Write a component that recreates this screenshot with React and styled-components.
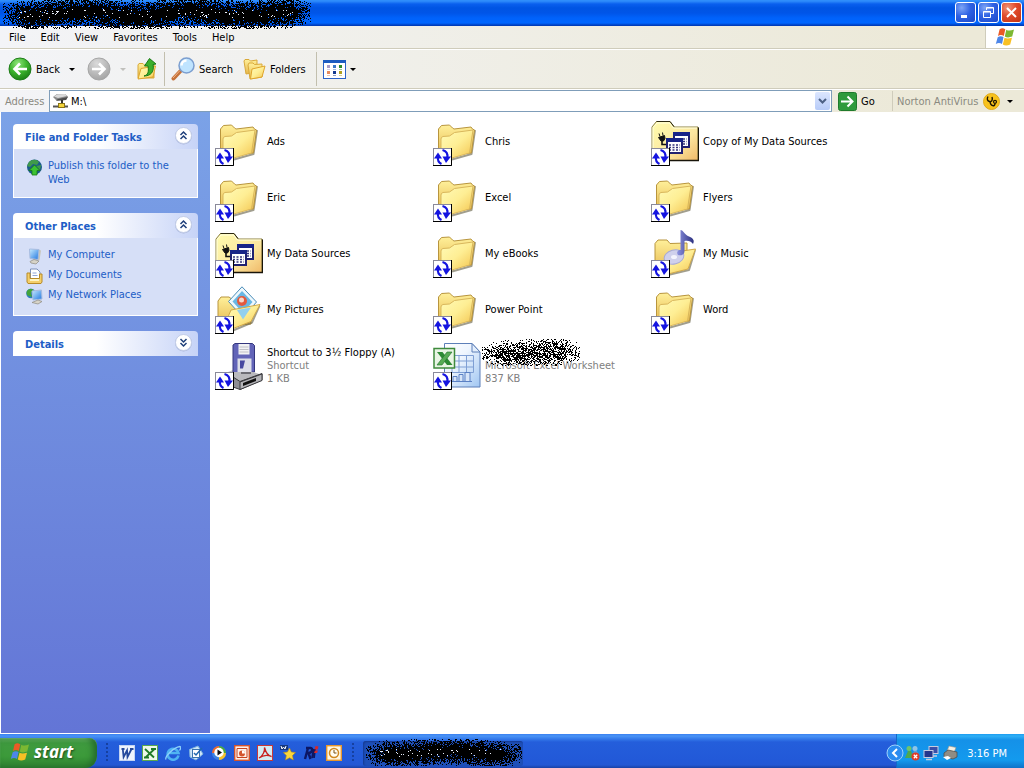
import { useState } from 'react';
import styled, { createGlobalStyle, css } from 'styled-components';

const GlobalStyle = createGlobalStyle`
  *, *::before, *::after {
    box-sizing: border-box;
  }

  body {
    margin: 0;
    font-family: Tahoma, 'DejaVu Sans Condensed', 'Noto Sans', sans-serif;
    font-size: 11px;
    line-height: 13px;
    color: #000;
    overflow: hidden;
  }

  button, input {
    font: inherit;
    color: inherit;
  }

  ul {
    list-style: none;
    margin: 0;
    padding: 0;
  }

  svg {
    display: block;
    flex: none;
  }
`;

const Desktop = styled.div`
  display: flex;
  flex-direction: column;
  height: 100vh;
  min-height: 480px;
`;

const PlainButton = styled.button`
  display: flex;
  align-items: center;
  border: none;
  background: none;
  padding: 0;
  cursor: default;
`;

/* ---------- title bar ---------- */

const TitleBar = styled.header`
  position: relative;
  display: flex;
  justify-content: flex-end;
  align-items: center;
  gap: 2px;
  flex: none;
  height: 26px;
  padding: 0 2px 1px 0;
  background: linear-gradient(
    #2f8dfb 0,
    #2f8dfb 1px,
    #0a5fee 4px,
    #0054e3 8px,
    #0055e8 13px,
    #0062fb 18px,
    #0066ff 23px,
    #0041c4 25px,
    #0038b0 26px
  );
`;

const WindowButton = styled(PlainButton)`
  justify-content: center;
  width: 21px;
  height: 21px;
  border: 1px solid #fff;
  border-radius: 3px;
  background: ${props =>
    props.$close
      ? 'radial-gradient(circle at 30% 25%, #f0947a, #e0492a 45%, #c03415)'
      : 'radial-gradient(circle at 30% 25%, #7fa6f6, #2f62e4 45%, #1c48c8)'};
`;

const ScribbleSvg = styled.svg`
  position: absolute;
  left: ${props => props.$left}px;
  top: ${props => props.$top}px;
  pointer-events: none;
  z-index: 1;
`;

/* ---------- menu, toolbar, address ---------- */

const MenuBar = styled.nav`
  display: flex;
  justify-content: space-between;
  flex: none;
  height: 23px;
  border-bottom: 1px solid #cfccbb;
  background: linear-gradient(90deg, #f3f4f7, #ece9d8 90%);
`;

const MenuList = styled.ul`
  display: flex;
  align-items: center;
  gap: 15px;
  && {
    padding-left: 9px;
  }
`;

const Throbber = styled.div`
  display: flex;
  align-items: center;
  justify-content: center;
  width: 39px;
  border-left: 1px solid #cfccbb;
  background: #fff;
`;

const Toolbar = styled.div`
  display: flex;
  align-items: center;
  flex: none;
  height: 40px;
  padding-left: 8px;
  border-top: 1px solid #fff;
  border-bottom: 1px solid #cfccbb;
  background: linear-gradient(90deg, #f3f4f7, #ece9d8 90%);
`;

const ToolButton = styled(PlainButton)`
  gap: 4px;
  height: 34px;
  margin-right: ${props => props.$after || 0}px;
`;

const ToolDivider = styled.div`
  width: 1px;
  height: 34px;
  margin: 0 6px;
  background: #c2bfae;
`;

const Caret = styled.span`
  border: 3px solid transparent;
  border-top-color: ${props => (props.$faded ? '#c0c0bc' : '#000')};
  border-bottom: none;
  margin-left: ${props => props.$before || 0}px;
`;

const AddressBar = styled.div`
  display: flex;
  align-items: center;
  flex: none;
  height: 23px;
  border-top: 1px solid #fff;
  background: linear-gradient(90deg, #f3f4f7, #ece9d8 90%);
`;

const AddressLabel = styled.label`
  width: 49px;
  padding-left: 5px;
  color: #8a8980;
`;

const AddressField = styled.div`
  display: flex;
  align-items: center;
  flex: 1;
  height: 22px;
  padding: 0 1px 0 2px;
  border: 1px solid #7f9db9;
  background: #fff;
`;

const AddressInput = styled.input`
  flex: 1;
  min-width: 0;
  height: 18px;
  padding: 0 2px;
  border: none;
  outline: none;
  background: none;
`;

const DropButton = styled(PlainButton)`
  justify-content: center;
  width: 15px;
  height: 18px;
  border-radius: 2px;
  background: linear-gradient(#dce6fe, #b7cbf8);
`;

const GoButton = styled(PlainButton)`
  gap: 4px;
  width: 60px;
  padding-left: 6px;
`;

const Norton = styled.div`
  display: flex;
  align-items: center;
  width: 132px;
  height: 20px;
  padding-left: 4px;
  border-left: 1px solid #cfccbb;
  color: #8a8980;
`;

const NortonName = styled.span`
  width: 86px;
  white-space: nowrap;
`;

/* ---------- body ---------- */

const Body = styled.div`
  display: flex;
  flex: 1;
  min-height: 0;
  padding: 0 0 1px 1px;
  background: #fff;
`;

const Sidebar = styled.aside`
  display: flex;
  flex-direction: column;
  gap: 15px;
  flex: none;
  width: 209px;
  padding: 12px;
  background: linear-gradient(#7ba2e7, #6375d6);
`;

const Panel = styled.section`
  border-radius: 4px 4px 0 0;
  overflow: hidden;
`;

const PanelHeader = styled.h2`
  display: flex;
  justify-content: space-between;
  height: 25px;
  margin: 0;
  padding: 2px 5px 0 12px;
  font-size: 11px;
  font-weight: bold;
  line-height: 24px;
  color: #215dc6;
  background: linear-gradient(90deg, #fff 45%, #c6d3f7);
`;

const PanelToggle = styled(PlainButton)`
  align-self: flex-start;
`;

const PanelBody = styled.ul`
  display: flex;
  flex-direction: column;
  gap: 3px;
  border: 1px solid #fff;
  border-top: none;
  background: #d6dff7;
  && {
    padding: 10px 12px;
  }
`;

const TaskLink = styled.a`
  display: flex;
  gap: 5px;
  line-height: 14px;
  color: #215dc6;
  text-decoration: none;

  &:hover {
    text-decoration: underline;
  }
`;

const FileGrid = styled.ul`
  display: grid;
  grid-template-columns: repeat(auto-fill, 210px);
  grid-auto-rows: 48px;
  gap: 8px;
  align-content: start;
  flex: 1;
  && {
    padding: 6px 0 0 5px;
  }
`;

const FileItem = styled.li`
  display: flex;
  align-items: center;
  gap: 4px;
`;

const FileText = styled.div`
  position: relative;
  padding-bottom: 2px;
  white-space: nowrap;
`;

const FileLine = styled.div`
  min-height: 13px;
  ${props =>
    props.$muted &&
    css`
      color: #808080;
    `}
`;

/* ---------- taskbar ---------- */

const Taskbar = styled.footer`
  display: flex;
  align-items: stretch;
  flex: none;
  height: 34px;
  background: linear-gradient(
    #3a80f0 0,
    #4a94f6 2px,
    #3479ea 5px,
    #245edb 8px,
    #2259d8 26px,
    #2458d4 31px,
    #1941a5 34px
  );
`;

const StartButton = styled(PlainButton)`
  gap: 4px;
  width: 97px;
  margin-top: 4px;
  padding: 0 0 2px 10px;
  border-radius: 0 8px 12px 0;
  font-family: 'Open Sans', 'Noto Sans', sans-serif;
  font-size: 17px;
  font-weight: bold;
  font-style: italic;
  line-height: 20px;
  color: #fff;
  text-shadow: 1px 1px 2px #1d4d1d;
  background: linear-gradient(#6cb96a, #3f9a3f 5px, #3c9a3a 18px, #2d8030);
  box-shadow: inset -4px 0 6px #246b2a, inset 0 1px 1px #8fd08d;
`;

const QuickLaunch = styled.div`
  display: flex;
  align-items: center;
  gap: 7px;
  padding: 4px 8px 0 9px;
`;

const Grip = styled.div`
  align-self: center;
  width: 4px;
  height: 20px;
  margin: 4px 0 0 ${props => props.$before || 0}px;
  background: radial-gradient(circle at 1px 1px, #1640a0 1px, transparent 1px) 0 0 / 4px 4px;
`;

const TaskButton = styled(PlainButton)`
  position: relative;
  width: 160px;
  height: 25px;
  margin: 7px 0 0 7px;
  border-radius: 3px;
  background: #1e4fb8;
  box-shadow: inset 1px 1px 2px #153a90;
`;

const Tray = styled.div`
  display: flex;
  align-items: center;
  gap: 3px;
  margin-left: auto;
  padding: 4px 17px 0 0;
  color: #fff;
`;

const TrayArea = styled.div`
  display: flex;
  align-items: center;
  align-self: stretch;
  margin-left: auto;
  width: 128px;
  background: linear-gradient(#1c9bf0 0, #2fb0f6 2px, #1591e8 6px, #139aee 26px, #0f72c8 34px);
  box-shadow: inset 1px 0 0 #1468c8;
`;

const Expander = styled(PlainButton)`
  margin: 4px 0 0 -10px;
`;

const Clock = styled.time`
  margin-left: 6px;
  white-space: nowrap;
`;

/* ---------- icons ---------- */

const HiddenSvg = styled.svg`
  position: absolute;
`;

const Gradients = () => (
  <HiddenSvg width="0" height="0" aria-hidden="true">
    <defs>
      <linearGradient id="folderFront" x1="0" y1="0" x2="1" y2="1">
        <stop offset="0" stopColor="#fffbb8" />
        <stop offset="0.5" stopColor="#feee94" />
        <stop offset="1" stopColor="#f3c44e" />
      </linearGradient>
      <linearGradient id="folderBack" x1="0" y1="0" x2="0" y2="1">
        <stop offset="0" stopColor="#fff09a" />
        <stop offset="1" stopColor="#e5b64c" />
      </linearGradient>
      <linearGradient id="folderFlat" x1="0" y1="0" x2="1" y2="1">
        <stop offset="0" stopColor="#fffcae" />
        <stop offset="0.6" stopColor="#fce7a0" />
        <stop offset="1" stopColor="#efb968" />
      </linearGradient>
      <radialGradient id="green" cx="0.4" cy="0.25" r="0.8">
        <stop offset="0" stopColor="#8fe57a" />
        <stop offset="0.5" stopColor="#3eb52e" />
        <stop offset="1" stopColor="#1a7d14" />
      </radialGradient>
      <radialGradient id="grey" cx="0.4" cy="0.25" r="0.8">
        <stop offset="0" stopColor="#dadada" />
        <stop offset="1" stopColor="#a2a2a2" />
      </radialGradient>
      <linearGradient id="screen" x1="0" y1="0" x2="1" y2="1">
        <stop offset="0" stopColor="#c8ecff" />
        <stop offset="1" stopColor="#1f76e0" />
      </linearGradient>
      <linearGradient id="page" x1="0" y1="0" x2="1" y2="1">
        <stop offset="0" stopColor="#fff" />
        <stop offset="0.4" stopColor="#eef5fe" />
        <stop offset="1" stopColor="#a0c6f2" />
      </linearGradient>
      <linearGradient id="note" x1="0" y1="0" x2="1" y2="0">
        <stop offset="0" stopColor="#8c92e0" />
        <stop offset="1" stopColor="#2c3080" />
      </linearGradient>
    </defs>
  </HiddenSvg>
);

function makeRandom(seed) {
  let s = seed;
  return () => {
    s = (s * 1664525 + 1013904223) % 4294967296;
    return s / 4294967296;
  };
}

// spray-can dots: dense along the middle, thinner towards the edges
function sprayPath(width, height, seed, density) {
  const random = makeRandom(seed);
  let d = '';
  for (let x = 0; x < width; x++) {
    const end = Math.min(1, x / 20, (width - x) / 20);
    const middle = height / 2 + Math.sin(x / 17) * height * 0.07;
    const half = (height / 2) * (0.65 + 0.35 * end);
    for (let y = 0; y < height; y++) {
      const off = Math.abs(y - middle) / half;
      const chance = density * (1.15 - off * off * 0.95) * (0.35 + 0.65 * end);
      if (random() < chance) d += `M${x} ${y}h1v1h-1z`;
    }
  }
  return d;
}

const Scribble = ({ width, height, left, top, seed, density = 0.88, specks = 0 }) => {
  const random = makeRandom(seed + 7);
  let white = '';
  for (let i = 0; i < specks; i++) {
    const x = Math.floor(14 + random() * (width - 28));
    const y = Math.floor(height * 0.38 + random() * height * 0.26);
    white += `M${x} ${y}h1v1h-1z`;
  }
  return (
    <ScribbleSvg
      $left={left}
      $top={top}
      width={width}
      height={height}
      shapeRendering="crispEdges"
      aria-hidden="true"
    >
      <path d={sprayPath(width, height, seed, density)} fill="#000" />
      <path d={white} fill="#e8ecf8" />
    </ScribbleSvg>
  );
};

const Flag = ({ size }) => (
  <svg width={size} height={size} viewBox="0 0 20 20">
    <path d="M4.6 2.2C6.6.8 8.4 1 10.3 2.2L8.8 9C7 7.9 5.1 7.7 3 9z" fill="#ea5a26" />
    <path d="M11.3 2.7C13.3 3.9 15.5 3.8 19 2.6L17.2 9.6C14 10.7 11.8 10.7 9.8 9.5z" fill="#7cb832" />
    <path d="M2.7 10.2C4.7 8.9 6.7 9 8.5 10.1L7 17C5.2 15.9 3.1 15.7.8 17z" fill="#4d86e8" />
    <path d="M9.5 10.7C11.5 11.8 13.6 11.8 17 10.7L15.2 17.6C12 18.8 9.9 18.7 7.8 17.5z" fill="#f8c024" />
  </svg>
);

const RoundArrow = ({ back }) => (
  <svg width="24" height="24" viewBox="0 0 24 24">
    <circle
      cx="12"
      cy="12"
      r="11"
      fill={back ? 'url(#green)' : 'url(#grey)'}
      stroke={back ? '#1f7d1a' : '#a6a6a6'}
    />
    <path
      d={back ? 'M19 12H7M12 6.500L6.500 12L12 17.500' : 'M5 12h12M12 6.500L17.500 12L12 17.500'}
      fill="none"
      stroke="#fff"
      strokeWidth="2.6"
    />
  </svg>
);

const UpFolder = () => (
  <svg width="22" height="24" viewBox="0 0 22 24">
    <path d="M2 8l1-1.500h4L8.500 8H18v13H2z" fill="url(#folderBack)" stroke="#d9a93a" />
    <path d="M2 22L5 11.500L19.500 9L17 20z" fill="url(#folderFront)" stroke="#dfa52c" />
    <path d="M8 19c4-1 5-4 4-10H8.500L13.500 1.500L20 7l-3 .5c1.500 7-2 11.500-9 11.500z" fill="#3bb02c" stroke="#1b7a16" />
  </svg>
);

const SearchIcon = () => (
  <svg width="24" height="24" viewBox="0 0 24 24">
    <path d="M2.500 21.500l7-7.500" stroke="#c5723a" strokeWidth="4" strokeLinecap="round" />
    <path d="M2 21l7-7.500" stroke="#f3b487" strokeWidth="1" />
    <circle cx="15.500" cy="8.500" r="7.500" fill="#bfe4ff" stroke="#7c9fd0" strokeWidth="1.500" />
    <path d="M10.500 8.500a5 5 0 0 1 5-5" fill="none" stroke="#fff" strokeWidth="2.500" />
  </svg>
);

const FoldersIcon = () => (
  <svg width="23" height="22" viewBox="0 0 23 22">
    <path d="M1 3l1-1.500h4L7.500 3 14 2v12L3 16z" fill="url(#folderBack)" stroke="#d9a93a" />
    <path d="M5 7l1-2h4l1.500 1.500L19 6v13L7 21z" fill="url(#folderBack)" stroke="#d9a93a" />
    <path d="M7.500 21L9 11l13-3-3 11z" fill="url(#folderFront)" stroke="#dfa52c" />
  </svg>
);

const ViewsIcon = () => (
  <svg width="23" height="19" viewBox="0 0 23 19" shapeRendering="crispEdges">
    <rect x="0.500" y="0.500" width="22" height="18" fill="#fff" stroke="#2a62c8" />
    <rect width="23" height="3" fill="#1c5bc0" />
    {['#a99bc8', '#3a78c8', '#2c8a28', '#e58a5c', '#153a90', '#b0a020'].map((fill, i) => (
      <g key={fill} fill={fill}>
        <rect x={4 + (i % 3) * 6} y={i < 3 ? 5 : 11} width="3" height="3" />
        <rect x={4 + (i % 3) * 6} y={i < 3 ? 9 : 15} width="3" height="1" opacity="0.5" />
      </g>
    ))}
  </svg>
);

const NetDriveIcon = () => (
  <svg width="17" height="16" viewBox="0 0 17 16">
    <path d="M1 4l4-3h8l3 2.500-2 3.500-9 1z" fill="#8a8a8a" />
    <path d="M2 3.500L5.500 1.200 13 1l2 2-9 2z" fill="#dadada" />
    <path d="M4 7.500l10-.5 2-3-10 2z" fill="#4c4c4c" />
    <path d="M10 7v5" stroke="#333" strokeWidth="2" />
    <path d="M1 13.500h15" stroke="#555" strokeWidth="2" />
    <rect x="6.500" y="10.500" width="6" height="4" fill="#f3d43c" stroke="#8a7418" />
  </svg>
);

const NortonIcon = () => (
  <svg width="17" height="17" viewBox="0 0 17 17">
    <circle cx="8.500" cy="8.500" r="8" fill="#f8c21c" stroke="#e0aa18" />
    <path d="M5 3.500c-1.500 2.500-.5 4.500 1.500 5s3.500-1.500 2.500-4.500M7 8.500c.5 5 5 5.500 5 2" fill="none" stroke="#1c1400" strokeWidth="1.4" />
    <circle cx="12" cy="8.800" r="1.500" fill="none" stroke="#1c1400" strokeWidth="1.2" />
  </svg>
);

const Chevrons = ({ down }) => (
  <svg width="19" height="19" viewBox="0 0 19 19">
    <circle cx="9.500" cy="10" r="8.500" fill="#a9b6d8" />
    <circle cx="9.500" cy="9.500" r="8" fill="#fff" stroke="#c3cde8" />
    <path
      d={down ? 'M6.500 6l3 3 3-3M6.500 10l3 3 3-3' : 'M6.500 9l3-3 3 3M6.500 13l3-3 3 3'}
      fill="none"
      stroke="#1f3f7a"
      strokeWidth="1.500"
    />
  </svg>
);

const GlobeIcon = () => (
  <svg width="17" height="17" viewBox="0 0 17 17">
    <circle cx="8.500" cy="8" r="7.500" fill="#1b5a8c" />
    <path d="M3 3c3-3 8-3 10 0l-2 3-4-1-3 3-3-1zM10 7l5-1-1 5z" fill="#3f9a4a" />
    <path d="M3 11.500l5.500-5.500 5.500 5.500h-3V16H6v-4.500z" fill="#3cc232" stroke="#167a14" strokeWidth="0.8" />
  </svg>
);

const ComputerIcon = () => (
  <svg width="17" height="17" viewBox="0 0 17 17">
    <path d="M12.500 1.500l2.500 1-1.500 10-2-1z" fill="#c9c6b8" />
    <path d="M3.500 1l9.500.5-1 10-8-1z" fill="url(#screen)" stroke="#a8bce0" />
    <path d="M4 13.500l4-2 5 1.500-3 3-5-1z" fill="#d8d4c8" stroke="#8d8a80" strokeWidth="0.7" />
  </svg>
);

const DocumentsIcon = () => (
  <svg width="17" height="17" viewBox="0 0 17 17">
    <path d="M4.500 1h6.500l3 3v9H4.500z" fill="#fff" stroke="#7d8fb8" />
    <path d="M6.500 5h4M6.500 7.500h5" stroke="#8fa5d8" />
    <path d="M1 5h3v5.500h9.500V6H16v8l-1 1.500H2L1 14z" fill="#f4cf6a" stroke="#b78a28" />
    <path d="M4 12h9" stroke="#fff4c0" strokeWidth="2" />
  </svg>
);

const NetworkIcon = () => (
  <svg width="17" height="17" viewBox="0 0 17 17">
    <circle cx="5" cy="5.500" r="4.800" fill="#2e7cc0" />
    <path d="M.5 4c2-4 5-4 7-2L5 5l1 4-3-1-2-1z" fill="#43a43c" />
    <path d="M6 3l9.500-1 .5 9-9 1z" fill="url(#screen)" stroke="#a8bce0" />
    <path d="M6 14.500l6-2.500 4 1.500-4 2.500z" fill="#d8d4c8" stroke="#8d8a80" strokeWidth="0.7" />
  </svg>
);

const SyncBadge = () => (
  <g>
    <rect x="0.500" y="30.500" width="18" height="17" fill="#fff" stroke="#8a8a9a" />
    <path d="M18.500 30v17.500H0" fill="none" stroke="#000" />
    <path d="M8.500 46C5.500 44.500 4.500 42 5 39" fill="none" stroke="#1414e0" strokeWidth="2.2" />
    <path d="M1 40.500L5 34.500L9 40.500z" fill="#1414e0" />
    <path d="M9.500 32c4 1 5.500 4 4.800 8" fill="none" stroke="#1414e0" strokeWidth="2.2" />
    <path d="M9.500 38.500h8.500L13 45z" fill="#1414e0" />
  </g>
);

const FolderArt = () => (
  <g strokeLinejoin="round">
    <path d="M19 41.500l19.500-5.500L42 12" fill="none" stroke="#6e6a52" strokeWidth="2" opacity="0.65" />
    <path d="M5.500 38V11l3-3.500 8-.5 3 3 1.500 1L38 9l1.500 2 2 1-3 23z" fill="url(#folderBack)" stroke="#b8953e" />
    <path d="M8 39.500V21q0-2 2-2.500l6.500-.5 5-3.500L40 12l-3.500 23L17 40.500z" fill="url(#folderFront)" stroke="#d9b75c" />
  </g>
);

const DataTable = ({ x, y }) => (
  <g>
    <rect x={x + 1} y={y + 1} width="15" height="14" fill="#fff" stroke="#202070" strokeWidth="2" />
    <rect x={x} y={y} width="17" height="4" fill="#182488" />
    <path
      d={`M${x + 3} ${y + 7}h11M${x + 3} ${y + 9.5}h11M${x + 3} ${y + 12}h11`}
      stroke="#34347c"
      strokeWidth="1.3"
      strokeDasharray="2 1.5"
    />
  </g>
);

const DataSourceArt = () => (
  <g>
    <path d="M1 42.500V9l4.500-5.500h13.500L23 9h24v33.500z" fill="url(#folderFlat)" stroke="#8c8040" />
    <path d="M5.500 3.500H19L23 8.500" fill="none" stroke="#2c2810" />
    <path d="M47.500 9.500v33H18" fill="none" stroke="#18140a" strokeWidth="1.3" />
    <path d="M2 30V9.500L6 5h12.500l4 5H46" fill="none" stroke="#ffffe0" />
    <path d="M7.500 19.500l6-2 .5 3-1.500 2.500H10zM9 18.500L8 15.500M12 17.500l-.5-3" fill="#111" stroke="#111" />
    <path d="M11 22v4.500h5" fill="none" stroke="#111" strokeWidth="1.6" />
    <DataTable x={22} y={14} />
    <DataTable x={15} y={20} />
  </g>
);

const MusicArt = () => (
  <g strokeLinejoin="round">
    <path d="M4 41V13.500L7 10h9l3 3.500L36 13v25L10 43z" fill="url(#folderBack)" stroke="#b8953e" />
    <path d="M17 45l21-5 6-20" fill="none" stroke="#6e6a52" strokeWidth="2" opacity="0.65" />
    <path d="M9 43.500L18 23l26.500-4-7.500 20-20 5z" fill="url(#folderFront)" stroke="#d0a848" />
    <ellipse cx="23" cy="27" rx="10" ry="7" transform="rotate(-15 23 27)" fill="#cfd0ec" stroke="#a7a9d6" />
    <ellipse cx="23" cy="27" rx="3" ry="2" fill="#f4f4fd" />
    <path d="M29.500 0c3 0 4 5 8.500 6.500 5 2 5.500 4.500 4 7.500-2-3-5-3.500-8.500-3v10c0 4-3.500 5-6.500 4-2-3 0-5 2.500-5z" fill="url(#note)" />
  </g>
);

const PicturesArt = () => (
  <g strokeLinejoin="round">
    <path d="M3 41V15l3-4h8l4 3 18 2v22z" fill="url(#folderBack)" stroke="#b8953e" />
    <path d="M27 .8L41.500 16 28 31.500 13.500 15.500z" fill="#eef8fd" stroke="#4a8cb8" />
    <path d="M27 5L37.500 16 28 27 17.500 15.500z" fill="#69b7e4" />
    <circle cx="27" cy="15" r="5" fill="#e4593c" />
    <circle cx="26.500" cy="14" r="2.500" fill="#f6d8cc" />
    <path d="M18 44.500l19-8 7.500-17" fill="none" stroke="#6e6a52" strokeWidth="2" opacity="0.65" />
    <path d="M8 42.500L16 24l29-5.500-9 17L17 43z" fill="url(#folderFront)" stroke="#d0a848" />
    <path d="M22 24l14-2.500-8 12z" fill="#93d0ee" />
  </g>
);

const FloppyArt = () => (
  <g>
    <path d="M3 34l15-6v8z" fill="#c8c8ca" />
    <path d="M18 3l2-1.500h17.500l2 2V30l-21.500 1z" fill="#6264b8" stroke="#34367e" />
    <path d="M23.500 2h11v10.500h-11z" fill="#f2f2f4" />
    <path d="M24.500 5h9M24.500 7.500h9M24.500 10h9" stroke="#b4b4bc" strokeWidth="0.8" />
    <path d="M22.500 16.500h14V30h-14z" fill="#dcdee8" />
    <path d="M25 18.500h5l-2 8h-3z" fill="#4648a0" />
    <path d="M4 36l14-6 20 0 9 3-22 8z" fill="#b9b9bd" />
    <path d="M18 35l7 4.500L47 31.500V38L25 47.500 18 45z" fill="#8e8e94" stroke="#3a3a3e" />
    <path d="M25 40l22-8v6.500L25 47.500z" fill="#b4b4b8" stroke="#3a3a3e" />
    <path d="M28 41l13-5v3L28 44z" fill="#111" />
    <path d="M26 31h10" stroke="#55555c" strokeWidth="1.5" />
  </g>
);

const ExcelArt = () => (
  <g>
    <path d="M11.500 1.500H39l8 8.500v35H11.500z" fill="url(#page)" stroke="#5c7fb8" />
    <path d="M39 1.500V10h8z" fill="#e4effc" stroke="#5c7fb8" />
    <path d="M19 13.500h21.500v17H19zM19 19h21.500M19 25h21.500M26 13.500v17M33.500 13.500v17" fill="none" stroke="#7f9fd4" />
    <path d="M20 39.500v-5h4v5M26 39.500v-7h4v7M32 39.500v-9h5v9M18 39.500h21" fill="#d7e5f8" stroke="#5a80c4" />
    <rect x="1" y="6.500" width="20.500" height="19.500" fill="#e9f5e4" stroke="#3f8a3c" strokeWidth="1.5" />
    <path d="M4 10h5.500l10 13H14z" fill="#2d8a34" />
    <path d="M14 10h5L9 23H4z" fill="#57ab54" stroke="#1f6e28" strokeWidth="0.6" />
  </g>
);

const art = {
  folder: FolderArt,
  data: DataSourceArt,
  music: MusicArt,
  pictures: PicturesArt,
  floppy: FloppyArt,
  excel: ExcelArt,
};

const FileIcon = ({ kind }) => {
  const Art = art[kind];
  return (
    <svg width="48" height="48" viewBox="0 0 48 48" aria-hidden="true">
      <Art />
      <SyncBadge />
    </svg>
  );
};

const SmallIcon = ({ children }) => (
  <svg width="16" height="16" viewBox="0 0 16 16" aria-hidden="true">
    {children}
  </svg>
);

const quickLaunch = [
  ['Word', <>
    <rect x=".5" y=".5" width="15" height="15" fill="#eef3fd" stroke="#c3d3f2" />
    <path d="M2.500 4h3M3.800 4l.8 8L8 5.500 8.500 12 12.500 4M11 4h3.500" fill="none" stroke="#24489c" strokeWidth="1.8" />
  </>],
  ['Excel', <>
    <rect x=".5" y=".5" width="15" height="15" fill="#eef8ea" stroke="#5aa84e" />
    <path d="M3 4l9 8.500M12.500 4L3.500 12.500M2 12.500h5M9 4h5" stroke="#1f7a28" strokeWidth="1.8" />
  </>],
  ['Internet Explorer', <>
    <path d="M13.500 10.500A5.500 5.500 0 1 1 13.500 8H4" fill="none" stroke="#4fb3f2" strokeWidth="2.6" />
    <path d="M1 14.500C-.5 12 8 2.500 15 1.500c1.500.5.500 2.500-.5 4" fill="none" stroke="#8fd2fa" strokeWidth="1.3" />
  </>],
  ['Show Desktop', <>
    <path d="M1.500 4.500L10 1l5 8-7 6-6-3z" fill="#cfe6f8" stroke="#7db2dc" />
    <rect x="4.500" y="4.500" width="7" height="8" fill="#fff" stroke="#3a74b0" />
    <path d="M6 8l2 2 6-7" fill="none" stroke="#2068b0" strokeWidth="1.5" />
  </>],
  ['Media Player', <>
    <circle cx="8" cy="8" r="7" fill="#3f83e0" />
    <path d="M8 1a7 7 0 0 1 7 7H8z" fill="#4ca83c" />
    <path d="M1 8a7 7 0 0 1 7-7v7z" fill="#ee6a2c" />
    <path d="M8 15a7 7 0 0 0 7-7H8z" fill="#f7c22c" />
    <circle cx="8" cy="7.500" r="4.700" fill="#fff" />
    <path d="M6.500 4.500l4.500 3-4.500 3z" fill="#111" />
  </>],
  ['PowerPoint', <>
    <rect x=".7" y=".7" width="14.6" height="14.6" fill="#fff0e8" stroke="#d4532c" strokeWidth="1.4" />
    <path d="M3 3.500h10v9H3z" fill="none" stroke="#c84420" />
    <circle cx="8" cy="8.500" r="3" fill="#d4532c" />
    <path d="M8 8.500V5.500a3 3 0 0 1 3 3z" fill="#fff" />
  </>],
  ['Acrobat', <>
    <rect x=".5" y=".5" width="15" height="15" fill="#d4ecf4" stroke="#c93838" />
    <path d="M2 13C6 11 8 6 7.500 2.500 9 8 11 11 14.500 11.500 10 9.500 6 10 2 13z" fill="none" stroke="#c82020" strokeWidth="1.3" />
  </>],
  ['Works', <>
    <path d="M9.500 3l1.800 4 4.200.5-3 3 .8 4.500-3.800-2.200L5.500 15l.8-4.500-3-3L7.500 7z" fill="#fbd63c" stroke="#b98c10" strokeWidth=".6" />
    <rect width="8" height="5" fill="#15357c" />
    <path d="M1 1l1 3 1.500-2L5 4l1-3" fill="none" stroke="#fff" />
  </>],
  ['RealNetworks', <>
    <path d="M2 14L5 3M3 3h4.500c3 .5 2 4.500-2 5l2 6" fill="none" stroke="#0c1664" strokeWidth="2.4" />
    <path d="M9 13l1.500-8 1.500 0-1 8" fill="none" stroke="#0c1664" strokeWidth="1.8" />
    <path d="M12.500 1l3 .5-1 3h-3zM12 5.500h3l-1 2.500h-3z" fill="#d82828" />
  </>],
  ['Outlook', <>
    <rect x=".7" y=".7" width="14.6" height="14.6" fill="#fff6e0" stroke="#e8962c" strokeWidth="1.4" />
    <circle cx="8" cy="8" r="4.500" fill="#fffdf4" stroke="#d08820" strokeWidth="1.5" />
    <path d="M8 5v3h2.500" fill="none" stroke="#7a5010" />
  </>],
];

/* ---------- content ---------- */

const menus = ['File', 'Edit', 'View', 'Favorites', 'Tools', 'Help'];

const places = [
  ['My Computer', ComputerIcon],
  ['My Documents', DocumentsIcon],
  ['My Network Places', NetworkIcon],
];

const files = [
  { name: 'Ads', kind: 'folder' },
  { name: 'Chris', kind: 'folder' },
  { name: 'Copy of My Data Sources', kind: 'data' },
  { name: 'Eric', kind: 'folder' },
  { name: 'Excel', kind: 'folder' },
  { name: 'Flyers', kind: 'folder' },
  { name: 'My Data Sources', kind: 'data' },
  { name: 'My eBooks', kind: 'folder' },
  { name: 'My Music', kind: 'music' },
  { name: 'My Pictures', kind: 'pictures' },
  { name: 'Power Point', kind: 'folder' },
  { name: 'Word', kind: 'folder' },
  { name: 'Shortcut to 3½ Floppy (A)', kind: 'floppy', type: 'Shortcut', size: '1 KB' },
  { name: '', kind: 'excel', type: 'Microsoft Excel Worksheet', size: '837 KB', hidden: true },
];

const TaskPanel = ({ title, startOpen = true, children }) => {
  const [open, setOpen] = useState(startOpen);
  return (
    <Panel>
      <PanelHeader>
        {title}
        <PanelToggle aria-label={`Toggle ${title}`} onClick={() => setOpen(!open)}>
          <Chevrons down={!open} />
        </PanelToggle>
      </PanelHeader>
      {open && children && <PanelBody>{children}</PanelBody>}
    </Panel>
  );
};

export default function App() {
  const [address, setAddress] = useState('M:\\');

  return (
    <Desktop>
      <GlobalStyle />
      <Gradients />

      <TitleBar>
        <Scribble width={308} height={31} left={3} top={-2} seed={11} specks={110} />
        <WindowButton aria-label="Minimize">
          <svg width="13" height="13">
            <path d="M2 10.500h6" stroke="#fff" strokeWidth="3" />
          </svg>
        </WindowButton>
        <WindowButton aria-label="Restore">
          <svg width="13" height="13" fill="none" stroke="#fff">
            <path d="M4.500 4V1.500h7v6H9M4.500 2h7" />
            <path d="M1.500 5.500h7v6h-7zM1.500 6h7" />
          </svg>
        </WindowButton>
        <WindowButton aria-label="Close" $close>
          <svg width="13" height="13">
            <path d="M2 2l9 9M11 2l-9 9" stroke="#fff" strokeWidth="2" />
          </svg>
        </WindowButton>
      </TitleBar>

      <MenuBar>
        <MenuList>
          {menus.map(menu => (
            <li key={menu}>
              <PlainButton>{menu}</PlainButton>
            </li>
          ))}
        </MenuList>
        <Throbber>
          <Flag size={20} />
        </Throbber>
      </MenuBar>

      <Toolbar>
        <ToolButton $after={12}>
          <RoundArrow back />
          Back
          <Caret $before={5} />
        </ToolButton>
        <ToolButton aria-label="Forward" $after={10}>
          <RoundArrow />
          <Caret $before={5} $faded />
        </ToolButton>
        <ToolButton aria-label="Up">
          <UpFolder />
        </ToolButton>
        <ToolDivider />
        <ToolButton $after={10}>
          <SearchIcon />
          Search
        </ToolButton>
        <ToolButton $after={4}>
          <FoldersIcon />
          Folders
        </ToolButton>
        <ToolDivider />
        <ToolButton aria-label="Views">
          <ViewsIcon />
          <Caret />
        </ToolButton>
      </Toolbar>

      <AddressBar>
        <AddressLabel htmlFor="address">Address</AddressLabel>
        <AddressField>
          <NetDriveIcon />
          <AddressInput
            id="address"
            value={address}
            onChange={event => setAddress(event.target.value)}
          />
          <DropButton aria-label="Show addresses">
            <svg width="9" height="7">
              <path d="M1 1l3.500 3.500L8 1" fill="none" stroke="#4d6185" strokeWidth="2" />
            </svg>
          </DropButton>
        </AddressField>
        <GoButton>
          <svg width="19" height="19">
            <rect x=".5" y=".5" width="18" height="18" rx="2" fill="#2f9a3c" stroke="#1f7a2c" />
            <path d="M3 9.500h11M9.500 4.500l5 5-5 5" fill="none" stroke="#fff" strokeWidth="2" />
          </svg>
          Go
        </GoButton>
        <Norton>
          <NortonName>Norton AntiVirus</NortonName>
          <PlainButton aria-label="Norton AntiVirus menu">
            <NortonIcon />
            <Caret $before={7} />
          </PlainButton>
        </Norton>
      </AddressBar>

      <Body>
        <Sidebar>
          <TaskPanel title="File and Folder Tasks">
            <li>
              <TaskLink href="#publish">
                <GlobeIcon />
                <span>Publish this folder to the Web</span>
              </TaskLink>
            </li>
          </TaskPanel>
          <TaskPanel title="Other Places">
            {places.map(([name, Icon]) => (
              <li key={name}>
                <TaskLink href="#places">
                  <Icon />
                  <span>{name}</span>
                </TaskLink>
              </li>
            ))}
          </TaskPanel>
          <TaskPanel title="Details" startOpen={false} />
        </Sidebar>

        <FileGrid>
          {files.map(file => (
            <FileItem key={file.kind + file.name}>
              <FileIcon kind={file.kind} />
              <FileText>
                <FileLine>{file.name}</FileLine>
                {file.type && <FileLine $muted>{file.type}</FileLine>}
                {file.size && <FileLine $muted>{file.size}</FileLine>}
                {file.hidden && (
                  <Scribble width={98} height={27} left={-3} top={-7} seed={5} density={0.62} />
                )}
              </FileText>
            </FileItem>
          ))}
        </FileGrid>
      </Body>

      <Taskbar>
        <StartButton>
          <Flag size={20} />
          start
        </StartButton>
        <Grip $before={9} />
        <QuickLaunch>
          {quickLaunch.map(([name, drawing]) => (
            <PlainButton key={name} aria-label={name}>
              <SmallIcon>{drawing}</SmallIcon>
            </PlainButton>
          ))}
        </QuickLaunch>
        <Grip $before={2} />
        <TaskButton aria-label="Explorer window">
          <Scribble width={156} height={27} left={3} top={-2} seed={29} specks={45} />
        </TaskButton>
        <TrayArea>
          <Expander aria-label="Show hidden icons">
            <svg width="18" height="18">
              <circle cx="9" cy="9" r="8" fill="#2a8cf0" stroke="#9fd2fb" />
              <path d="M11 5L7 9l4 4" fill="none" stroke="#fff" strokeWidth="2" />
            </svg>
          </Expander>
          <Tray>
            <SmallIcon>
              <circle cx="5" cy="3.500" r="2.500" fill="#6fc46a" />
              <circle cx="11" cy="3.500" r="2.500" fill="#8fc4e8" />
              <path d="M1 13l3-7h3l3 7z" fill="#4fa850" />
              <path d="M8 11l2-5h3l2 5z" fill="#5ea0d8" />
              <circle cx="11.500" cy="11.500" r="4" fill="#e03c28" />
              <path d="M9.800 9.800l3.400 3.400M13.200 9.800l-3.400 3.400" stroke="#fff" strokeWidth="1.3" />
            </SmallIcon>
            <SmallIcon>
              <rect x="6" y="1.500" width="9" height="7" fill="#3a4fa8" stroke="#c6cce0" />
              <rect x="1" y="5.500" width="9" height="7" fill="#24368c" stroke="#c6cce0" />
              <path d="M3 14.500h6M10 11h4" stroke="#c6cce0" strokeWidth="1.5" />
            </SmallIcon>
            <SmallIcon>
              <path d="M5 6l2-5 7 1.500-2 5z" fill="#f4f0e4" stroke="#98948a" strokeWidth=".6" />
              <path d="M2 8l4-3 9 2v5l-4 2-9-2z" fill="#8f8c84" stroke="#4a4844" strokeWidth=".7" />
              <path d="M1 12l5-1 3 2-4 2z" fill="#fff" />
            </SmallIcon>
            <Clock>3:16 PM</Clock>
          </Tray>
        </TrayArea>
      </Taskbar>
    </Desktop>
  );
}
